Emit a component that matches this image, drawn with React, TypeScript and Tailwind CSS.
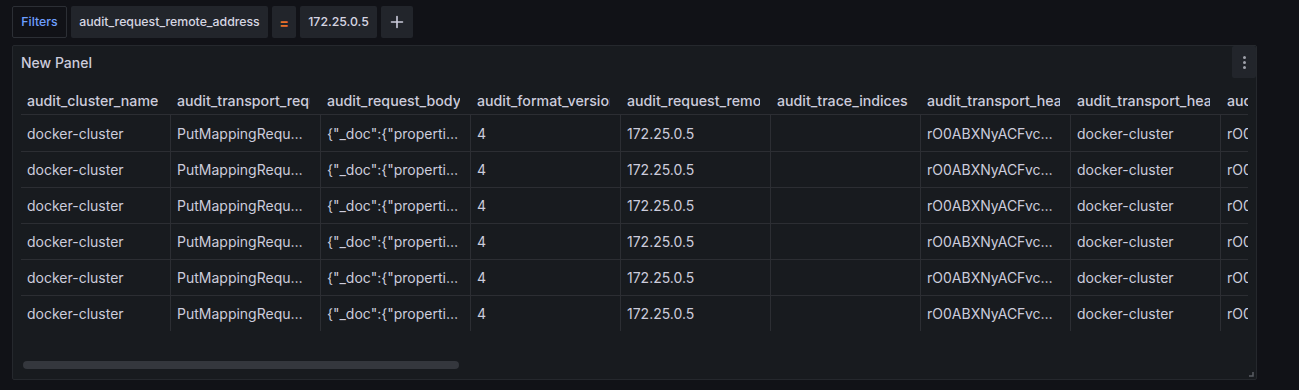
const COLUMNS = [
  "audit_cluster_name",
  "audit_transport_request_type",
  "audit_request_body",
  "audit_format_version",
  "audit_request_remote_address",
  "audit_trace_indices",
  "audit_transport_headers",
  "audit_transport_headers_cluster",
  "audit_transport_headers_extra",
];

const ROW = [
  "docker-cluster",
  "PutMappingRequest",
  '{"_doc":{"properties":{}}}',
  "4",
  "172.25.0.5",
  "",
  "rO0ABXNyACFvcmcuZWxhc3RpYw",
  "docker-cluster",
  "rO0ABXNyACFvcmcuZWxhc3RpYw",
];

const ROWS = Array.from({ length: 6 }, () => ROW);

export default function App() {
  return (
    <main
      className="w-[1299px] h-[390px] bg-[#111217] text-[#ccccdc] text-[14px] overflow-hidden"
      style={{ fontFamily: "Inter, 'Noto Sans', sans-serif" }}
    >
      {/* Filter bar */}
      <div className="flex items-center gap-[4px] pl-[12px] pt-[6px] h-[38px] text-[12.3px] font-medium">
        <div className="h-[32px] w-[55px] justify-center flex items-center border border-[#2c2f35] rounded-[2px] text-[#6e9fff]">
          Filters
        </div>
        <div className="h-[32px] w-[197px] justify-center flex items-center bg-[#22252b] rounded-[2px] text-[#d6d6e2]">
          audit_request_remote_address
        </div>
        <div className="h-[32px] w-[24px] flex items-center justify-center bg-[#22252b] rounded-[2px] text-[14px] font-bold text-[#e8702a]">
          =
        </div>
        <div className="h-[32px] w-[77px] justify-center flex items-center bg-[#22252b] rounded-[2px] text-[#d6d6e2]">
          172.25.0.5
        </div>
        <div className="h-[32px] w-[32px] flex items-center justify-center bg-[#22252b] rounded-[2px]">
          <svg width="14" height="14" viewBox="0 0 14 14" fill="none" stroke="#ccccdc" strokeWidth="1.6" strokeLinecap="round">
            <path d="M7 1.5v11M1.5 7h11" />
          </svg>
        </div>
      </div>

      {/* Panel */}
      <section className="ml-[12px] mt-[7px] w-[1245px] h-[335px] bg-[#181b1f] border border-[#25282d] rounded-[2px] flex flex-col relative">
        <header className="h-[33px] flex items-start justify-between pl-[8px]">
          <h2 className="h-[32px] flex items-center font-medium text-[14px] text-[#ccccdc]">New Panel</h2>
          <button className="w-[24px] h-[32px] bg-[#22252b] rounded-[2px] flex flex-col items-center justify-center gap-[2px]">
            <span className="w-[3px] h-[3px] rounded-full bg-[#9fa1aa]" />
            <span className="w-[3px] h-[3px] rounded-full bg-[#9fa1aa]" />
            <span className="w-[3px] h-[3px] rounded-full bg-[#9fa1aa]" />
          </button>
        </header>

        <div className="mx-[8px] w-[1227px] overflow-hidden flex-1 flex flex-col">
          <div className="w-max">
            {/* Header row */}
            <div className="flex h-[36px] pt-[9px] border-b border-[#2c2e33] text-[14.2px]">
              {COLUMNS.map((c) => (
                <div key={c} className="w-[150px] shrink-0 pl-[6px] pr-[11px] flex items-center font-medium">
                  <span className="block min-w-0 overflow-hidden whitespace-nowrap">{c}</span>
                </div>
              ))}
            </div>
            {ROWS.map((r, i) => (
              <div key={i} className={`flex h-[36px] ${i > 0 ? "border-t border-[#2c2e33]" : ""}`}>
                {r.map((v, j) => (
                  <div
                    key={j}
                    className="w-[150px] shrink-0 pl-[6px] pr-[12px] flex items-center border-r border-[#2c2e33]"
                  >
                    <span className="block min-w-0 overflow-hidden text-ellipsis whitespace-nowrap">{v}</span>
                  </div>
                ))}
              </div>
            ))}
          </div>
        </div>

        {/* Scrollbar */}
        <div className="absolute left-[10px] bottom-[10px] w-[436px] h-[8px] rounded-full bg-[#34373d]" />
        {/* Resize handle */}
        <svg className="absolute right-[2px] bottom-[2px]" width="6" height="6" viewBox="0 0 6 6">
          <path d="M5 1v4H1" fill="none" stroke="#5a5d64" strokeWidth="1.5" />
        </svg>
      </section>
    </main>
  );
}
